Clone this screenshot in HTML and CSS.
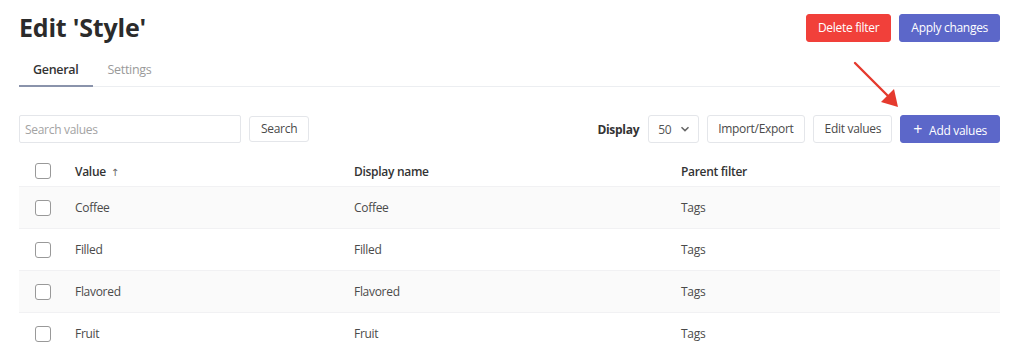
FILE: index.html
```html
<!DOCTYPE html>
<html>
<head>
<meta charset="utf-8">
<link rel="stylesheet" href="styles.css">
</head>
<body>
<div class="page">
  <header class="top">
    <h1 class="title">Edit 'Style'</h1>
    <div class="actions">
      <button class="btn btn-danger">Delete filter</button>
      <button class="btn btn-primary">Apply changes</button>
    </div>
  </header>
  <nav class="tabs">
    <span class="tab active">General</span>
    <span class="tab">Settings</span>
  </nav>
  <div class="toolbar">
    <div class="search">
      <input class="search-input" type="text" placeholder="Search values">
      <button class="btn btn-light">Search</button>
    </div>
    <div class="tools">
      <span class="display-label">Display</span>
      <div class="select"><span>50</span><svg class="chev" width="10" height="6" viewBox="0 0 10 6"><path d="M1.5 1.2 L5 4.6 L8.5 1.2" fill="none" stroke="#666" stroke-width="1.5"/></svg></div>
      <button class="btn btn-light btn-io">Import/Export</button>
      <button class="btn btn-light btn-edit">Edit values</button>
      <button class="btn btn-primary btn-add"><span class="plus">+</span>Add values</button>
    </div>
  </div>
  <div class="table">
    <div class="row head">
      <div class="c-check"><span class="box"></span></div>
      <div class="c-value">Value <span class="arrow-up">↑</span></div>
      <div class="c-name">Display name</div>
      <div class="c-parent">Parent filter</div>
    </div>
    <div class="row shade">
      <div class="c-check"><span class="box"></span></div>
      <div class="c-value">Coffee</div>
      <div class="c-name">Coffee</div>
      <div class="c-parent">Tags</div>
    </div>
    <div class="row">
      <div class="c-check"><span class="box"></span></div>
      <div class="c-value">Filled</div>
      <div class="c-name">Filled</div>
      <div class="c-parent">Tags</div>
    </div>
    <div class="row shade">
      <div class="c-check"><span class="box"></span></div>
      <div class="c-value">Flavored</div>
      <div class="c-name">Flavored</div>
      <div class="c-parent">Tags</div>
    </div>
    <div class="row">
      <div class="c-check"><span class="box"></span></div>
      <div class="c-value">Fruit</div>
      <div class="c-name">Fruit</div>
      <div class="c-parent">Tags</div>
    </div>
  </div>
  <svg class="annot" width="60" height="60" viewBox="0 0 60 60">
    <line x1="3" y1="3" x2="40" y2="40" stroke="#e53a2e" stroke-width="2.4" stroke-linecap="round"/>
    <polygon points="46,47 29,42 42,29" fill="#e53a2e"/>
  </svg>
</div>
</body>
</html>
```
FILE: styles.css
```css
* { box-sizing: border-box; }
html, body { margin: 0; padding: 0; background: #fff; }
body {
  font-family: "Open Sans", "Noto Sans", sans-serif;
  font-size: 12px;
  letter-spacing: -0.3px;
  color: #333;
  width: 1024px;
  height: 352px;
  overflow: hidden;
}
.page {
  position: relative;
  padding: 0 24px 0 19px;
}
.top {
  display: flex;
  justify-content: space-between;
  align-items: flex-start;
  height: 56px;
}
.title {
  margin: 10px 0 0 0;
  font-size: 25px;
  font-weight: 700;
  color: #2b2b2b;
  letter-spacing: -0.2px;
  line-height: 34px;
}
.actions {
  display: flex;
  gap: 8px;
  margin-top: 14px;
}
.btn {
  font-family: inherit;
  font-size: 12px;
  letter-spacing: -0.3px;
  height: 28px;
  padding: 0 11px;
  border-radius: 3px;
  border: 1px solid transparent;
  cursor: pointer;
  line-height: 26px;
}
.btn-danger { background: #f1403a; color: #fff; border-color: #f1403a; }
.btn-primary { background: #5c67c9; color: #fff; border-color: #5c67c9; }
.btn-light { background: #fff; color: #4a4a4a; border: 1px solid #e4e6ea; }
.tabs {
  display: flex;
  border-bottom: 1px solid #eceef1;
  height: 31px;
}
.tab {
  padding: 0 14px;
  line-height: 28px;
  font-size: 12.5px;
  color: #9a9a9a;
  font-weight: 500;
}
.tab.active {
  color: #333;
  font-weight: 600;
  border-bottom: 2px solid #8a93ab;
  padding: 0 15px 0 14px;
  height: 31px;
}
.toolbar {
  display: flex;
  justify-content: space-between;
  align-items: center;
  margin-top: 28px;
  height: 28px;
}
.search { display: flex; gap: 8px; align-items: center; }
.search-input {
  width: 222px;
  height: 28px;
  border: 1px solid #e4e6ea;
  border-radius: 2px;
  padding: 0 5px;
  font-family: inherit;
  font-size: 12px;
  letter-spacing: -0.3px;
  color: #333;
  outline: none;
}
.search-input::placeholder { color: #a3a3a3; }
.search .btn { height: 26px; line-height: 24px; padding: 0 11px; }
.tools { display: flex; align-items: center; gap: 8px; }
.display-label { font-weight: 700; color: #333; margin-right: 1px; }
.select {
  width: 51px;
  height: 28px;
  border: 1px solid #e4e6ea;
  border-radius: 3px;
  display: flex;
  align-items: center;
  justify-content: space-between;
  padding: 0 8px 0 9px;
  color: #555;
}
.btn-io { padding: 0 10px; }
.btn-edit { padding: 0 10px 0 11px; }
.btn-add { padding: 0 12px; }
.plus { font-size: 16px; margin-right: 7px; font-weight: 400; }
.table { margin-top: 13px; }
.row {
  display: flex;
  align-items: center;
  height: 42px;
  border-bottom: 1px solid #f1f1f3;
  color: #4a4a4a;
}
.row.head { height: 31px; font-weight: 600; color: #333; }
.row.shade { background: #fafafa; }
.c-check { width: 56px; padding-left: 16px; display: flex; align-items: center; }
.box {
  width: 16px;
  height: 16px;
  border: 1px solid #999;
  border-radius: 3px;
  display: block;
  background: #fff;
}
.c-value { width: 279px; }
.c-name { width: 327px; }
.c-parent { flex: 1; }
.arrow-up { font-family: "DejaVu Sans", sans-serif; font-weight: 400; font-size: 10px; color: #666; margin-left: 2px; }
.annot { position: absolute; left: 852px; top: 60px; }
```
